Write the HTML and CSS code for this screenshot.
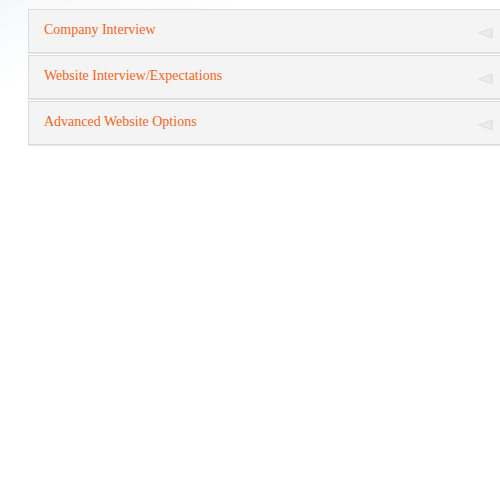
FILE: index.html
```html
<!DOCTYPE html>
<html>
<head>
<meta charset="utf-8">
<link rel="stylesheet" href="styles.css">
</head>
<body>
<div class="accordion">
  <div class="panel">
    <span class="title">Company Interview</span>
    <svg class="arrow" width="16" height="12" viewBox="0 0 16 12"><polygon points="0.5,6 15.5,0.5 15.5,11.5" fill="#dcdcdc"/><polygon points="3,6 14.3,2 14.3,10" fill="#ececec"/></svg>
  </div>
  <div class="panel">
    <span class="title">Website Interview/Expectations</span>
    <svg class="arrow" width="16" height="12" viewBox="0 0 16 12"><polygon points="0.5,6 15.5,0.5 15.5,11.5" fill="#dcdcdc"/><polygon points="3,6 14.3,2 14.3,10" fill="#ececec"/></svg>
  </div>
  <div class="panel">
    <span class="title">Advanced Website Options</span>
    <svg class="arrow" width="16" height="12" viewBox="0 0 16 12"><polygon points="0.5,6 15.5,0.5 15.5,11.5" fill="#dcdcdc"/><polygon points="3,6 14.3,2 14.3,10" fill="#ececec"/></svg>
  </div>
</div>
</body>
</html>
```
FILE: styles.css
```css
html, body {
  margin: 0;
  padding: 0;
  background: #ffffff;
}
body {
  background: linear-gradient(160deg, #f5f8fa 0px, #ffffff 90px);
  min-height: 484px;
  font-family: "Liberation Serif", "Times New Roman", serif;
}
.accordion {
  padding: 9px 0 0 28px;
  display: flex;
  flex-direction: column;
  gap: 2px;
}
.panel {
  height: 42px;
  box-sizing: content-box;
  background: #f4f4f4;
  border: 1px solid #dcdcdc;
  border-right: none;
  box-shadow: 0 1px 0 #e6e6e6;
  display: flex;
  align-items: center;
  justify-content: space-between;
  padding-left: 15px;
  padding-right: 7px;
}
.title {
  color: #f26522;
  font-size: 14px;
  padding-bottom: 3px;
}
.arrow {
  display: block;
  margin-top: 3px;
}
```
